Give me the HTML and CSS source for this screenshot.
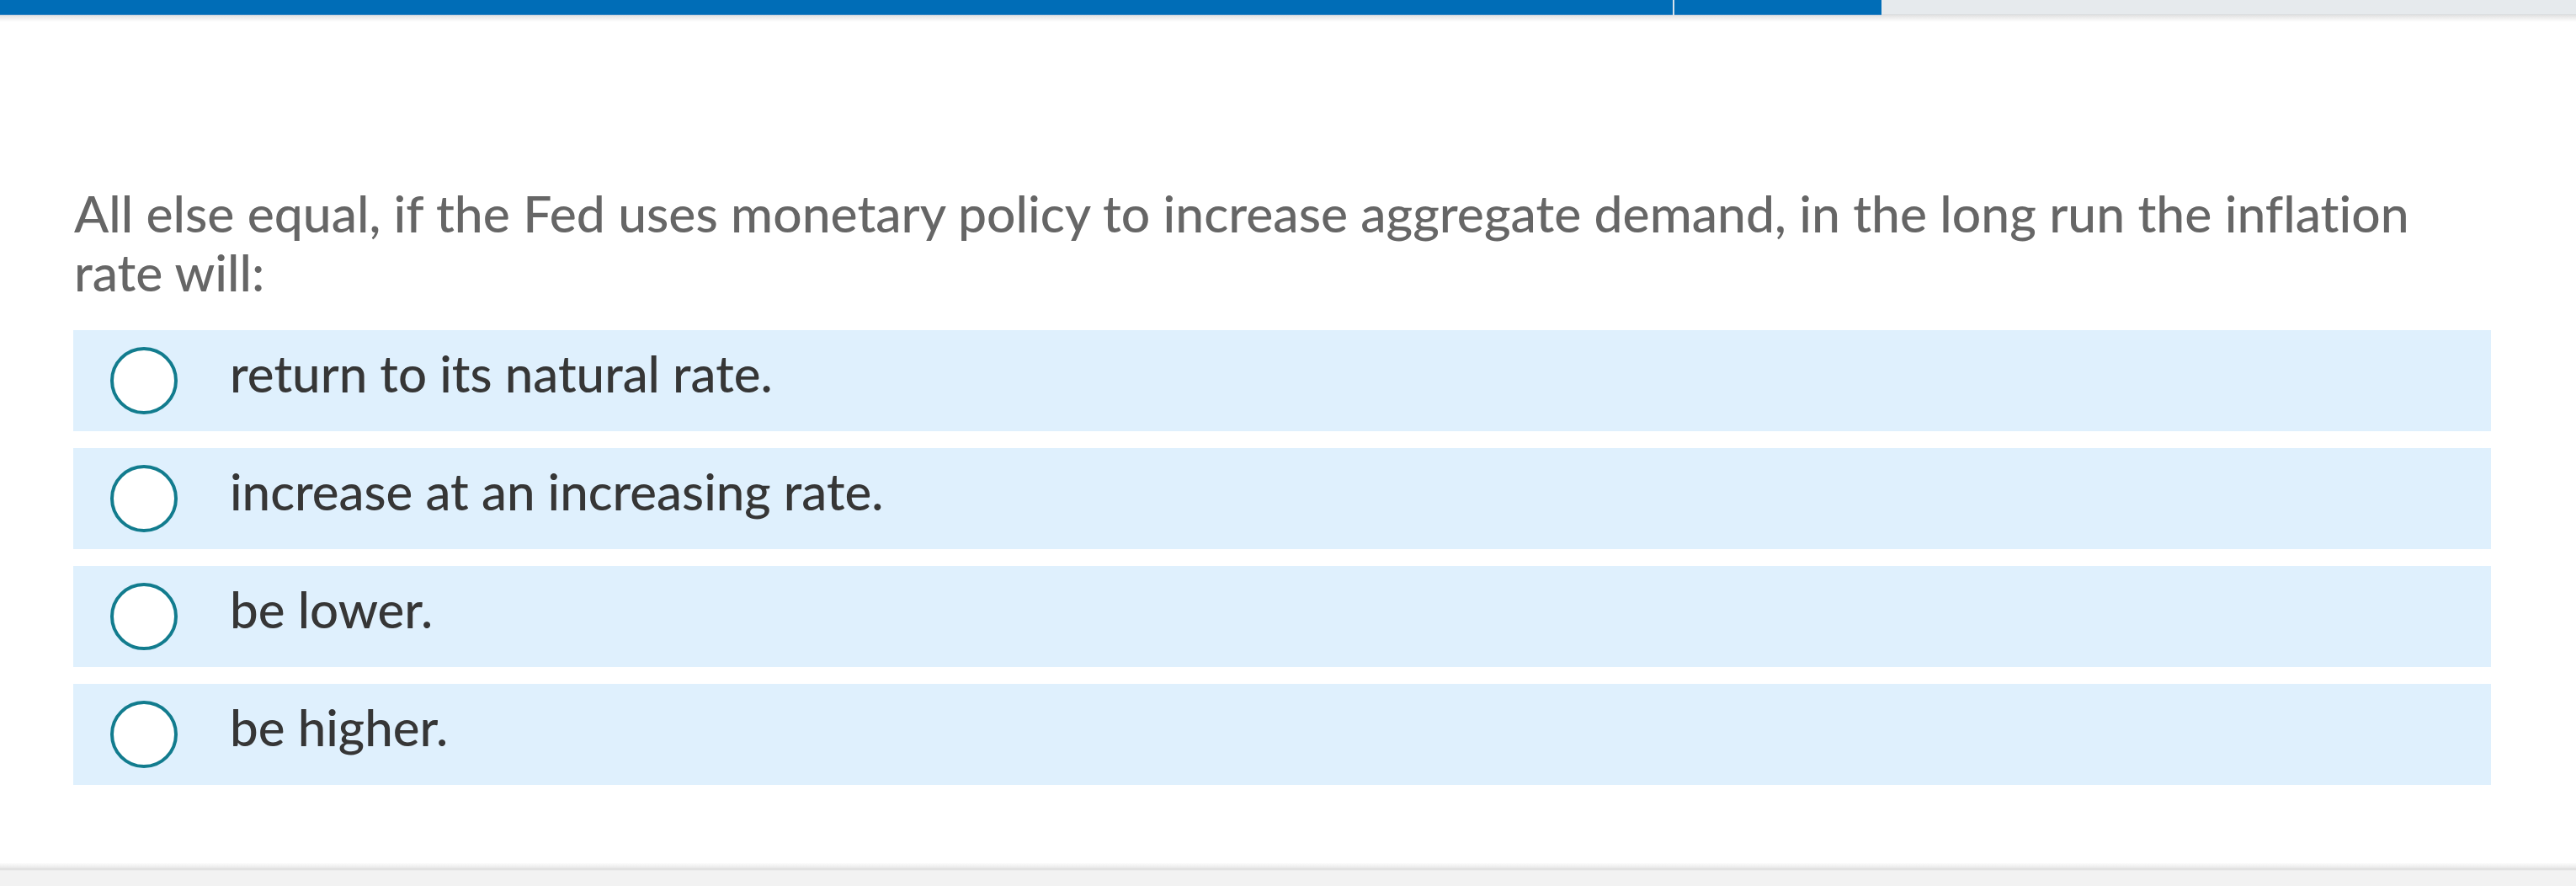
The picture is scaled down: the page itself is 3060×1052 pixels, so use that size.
FILE: index.html
```html
<!DOCTYPE html>
<html lang="en">
<head>
<meta charset="utf-8">
<title>Question</title>
<link rel="stylesheet" href="styles.css">
</head>
<body>
<div class="page">
  <header class="progress">
    <div class="seg seg-main"></div>
    <div class="seg-divider"></div>
    <div class="seg seg-current"></div>
    <div class="seg-rest"></div>
  </header>
  <div class="progress-shadow"></div>
  <main class="content">
    <p class="question">All else equal, if the Fed uses monetary policy to increase aggregate demand, in the long run the inflation rate will:</p>
    <ul class="options">
      <li class="option"><span class="radio"></span><span class="label">return to its natural rate.</span></li>
      <li class="option"><span class="radio"></span><span class="label">increase at an increasing rate.</span></li>
      <li class="option"><span class="radio"></span><span class="label">be lower.</span></li>
      <li class="option"><span class="radio"></span><span class="label">be higher.</span></li>
    </ul>
  </main>
  <footer class="footer"></footer>
</div>
</body>
</html>
```

FILE: styles.css
```css
html, body {
  margin: 0;
  padding: 0;
  background: #ffffff;
}
.page {
  width: 3060px;
  height: 1052px;
  display: flex;
  flex-direction: column;
  overflow: hidden;
  font-family: "Lato", "Noto Sans", sans-serif;
  font-variant-ligatures: none;
}
.progress {
  display: flex;
  height: 18px;
  flex: none;
  background: #e6eaed;
}
.seg {
  background: #006db7;
  height: 17px;
  border-bottom: 1px solid #3a86c4;
}
.seg-main { width: 1987px; }
.seg-divider { width: 2px; background: #d6e2ec; }
.seg-current { width: 246px; }
.seg-rest { flex: 1; background: #e6eaed; border-bottom: 1px solid #d8dadc; }
.progress-shadow {
  height: 8px;
  flex: none;
  background: linear-gradient(#e2e2e2, #ffffff);
}
.content {
  flex: 1;
  padding: 0 101px 0 87px;
}
.question {
  margin: 192px 0 0 1px;
  font-size: 60.6px;
  line-height: 70px;
  font-weight: 500;
  color: #666666;
}
.options {
  list-style: none;
  margin: 34px 0 0 0;
  padding: 0;
  display: flex;
  flex-direction: column;
  gap: 20px;
}
.option {
  height: 120px;
  background: #dff0fd;
  display: flex;
  align-items: center;
  padding-left: 44px;
}
.radio {
  width: 72px;
  height: 72px;
  border: 4px solid #127c8e;
  border-radius: 50%;
  background: #ffffff;
  flex: none;
}
.label {
  margin-left: 62px;
  padding-bottom: 18px;
  font-size: 60px;
  line-height: 72px;
  font-weight: 500;
  color: #363636;
}
.footer {
  flex: none;
  height: 27px;
  background: linear-gradient(#fbfbfb 0px, #ebebeb 5px, #dcdcdc 7px, #e6e6e6 8px, #f2f2f2 9px, #f2f2f2 27px);
}
```
